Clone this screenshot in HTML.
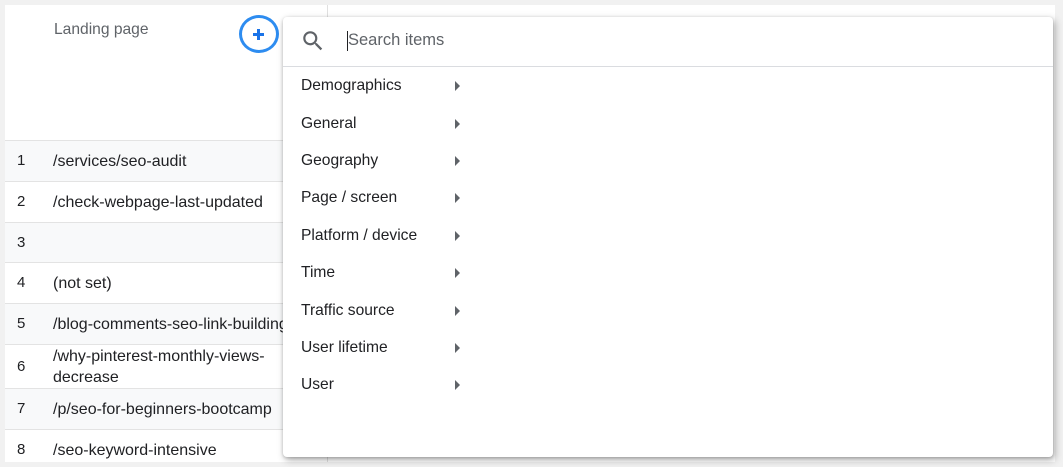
<!DOCTYPE html>
<html><head><style>
*{margin:0;padding:0;box-sizing:border-box}
body{width:1063px;height:467px;background:#f1f1f1;font-family:"Liberation Sans",sans-serif;position:relative;overflow:hidden}
.card{position:absolute;left:5px;top:5px;width:1050px;height:457px;background:#fff}
.vl{position:absolute;left:327px;top:5px;width:1px;height:457px;background:#e0e0e0}
.row{position:absolute;left:5px;width:322px;border-top:1px solid #e3e3e3;font-size:16px;color:#202124;overflow:hidden}
.row .n{position:absolute;left:12px;font-size:15px}
.row .t{position:absolute;left:48px;line-height:21px;white-space:nowrap}
.g{background:#f8f9fa}
.menu{position:absolute;left:283px;top:17px;width:770px;height:440px;background:#fff;border-radius:4px;box-shadow:2px 3px 8px rgba(0,0,0,.3),0 1px 3px rgba(0,0,0,.2)}
.sr{height:50px;border-bottom:1px solid #dadce0;position:relative}
.it{position:absolute;left:18px;font-size:15.6px;color:#202124}
.ar{position:absolute;left:154px;top:4px;width:0;height:0;border-top:5px solid transparent;border-bottom:5px solid transparent;border-left:5px solid #5f6368}
</style></head><body>
<div class="card"></div>
<div class="vl"></div>
<div style="position:absolute;left:54px;top:21px;font-size:15.6px;color:#5f6368">Landing page</div>
<div style="position:absolute;left:239px;top:15px;width:40px;height:38px;border:3px solid #2d8cf0;border-radius:50%"></div>
<div style="position:absolute;left:253px;top:29px;width:11px;height:11px;background:linear-gradient(#1a73e8,#1a73e8) center/11px 3px no-repeat,linear-gradient(#1a73e8,#1a73e8) center/3px 11px no-repeat"></div>
<div class="row g" style="top:140px;height:41px"><span class="n" style="top:11px">1</span><span class="t" style="top:10px">/services/seo-audit</span></div>
<div class="row" style="top:181px;height:41px"><span class="n" style="top:11px">2</span><span class="t" style="top:10px">/check-webpage-last-updated</span></div>
<div class="row g" style="top:222px;height:40px"><span class="n" style="top:11px">3</span></div>
<div class="row" style="top:262px;height:41px"><span class="n" style="top:11px">4</span><span class="t" style="top:10px">(not set)</span></div>
<div class="row g" style="top:303px;height:41px"><span class="n" style="top:11px">5</span><span class="t" style="top:10px">/blog-comments-seo-link-building</span></div>
<div class="row" style="top:344px;height:44px"><span class="n" style="top:13px">6</span><span class="t" style="top:1px">/why-pinterest-monthly-views-<br>decrease</span></div>
<div class="row g" style="top:388px;height:41px"><span class="n" style="top:11px">7</span><span class="t" style="top:10px">/p/seo-for-beginners-bootcamp</span></div>
<div class="row" style="top:429px;height:33px"><span class="n" style="top:11px">8</span><span class="t" style="top:10px">/seo-keyword-intensive</span></div>
<div class="menu">
<div class="sr">
<svg style="position:absolute;left:17px;top:11px" width="26" height="26" viewBox="0 0 24 24"><path fill="#5f6368" d="M15.5 14h-.79l-.28-.27A6.47 6.47 0 0 0 16 9.5 6.5 6.5 0 1 0 9.5 16c1.610 0 3.09-.59 4.23-1.57l.27.28v.79l5 4.99L20.49 19l-4.99-5zm-6 0C7.01 14 5 11.99 5 9.5S7.01 5 9.5 5 14 7.01 14 9.5 11.99 14 9.5 14z"/></svg>
<div style="position:absolute;left:64px;top:14px;width:1px;height:20px;background:#202124"></div>
<div style="position:absolute;left:65px;top:14px;font-size:16.5px;color:#5f6368">Search items</div>
</div>
<div class="it" style="top:60px">Demographics<i class="ar"></i></div>
<div class="it" style="top:98px">General<i class="ar"></i></div>
<div class="it" style="top:135px">Geography<i class="ar"></i></div>
<div class="it" style="top:172px">Page / screen<i class="ar"></i></div>
<div class="it" style="top:210px">Platform / device<i class="ar"></i></div>
<div class="it" style="top:247px">Time<i class="ar"></i></div>
<div class="it" style="top:285px">Traffic source<i class="ar"></i></div>
<div class="it" style="top:322px">User lifetime<i class="ar"></i></div>
<div class="it" style="top:359px">User<i class="ar"></i></div>
</div>
</body></html>
